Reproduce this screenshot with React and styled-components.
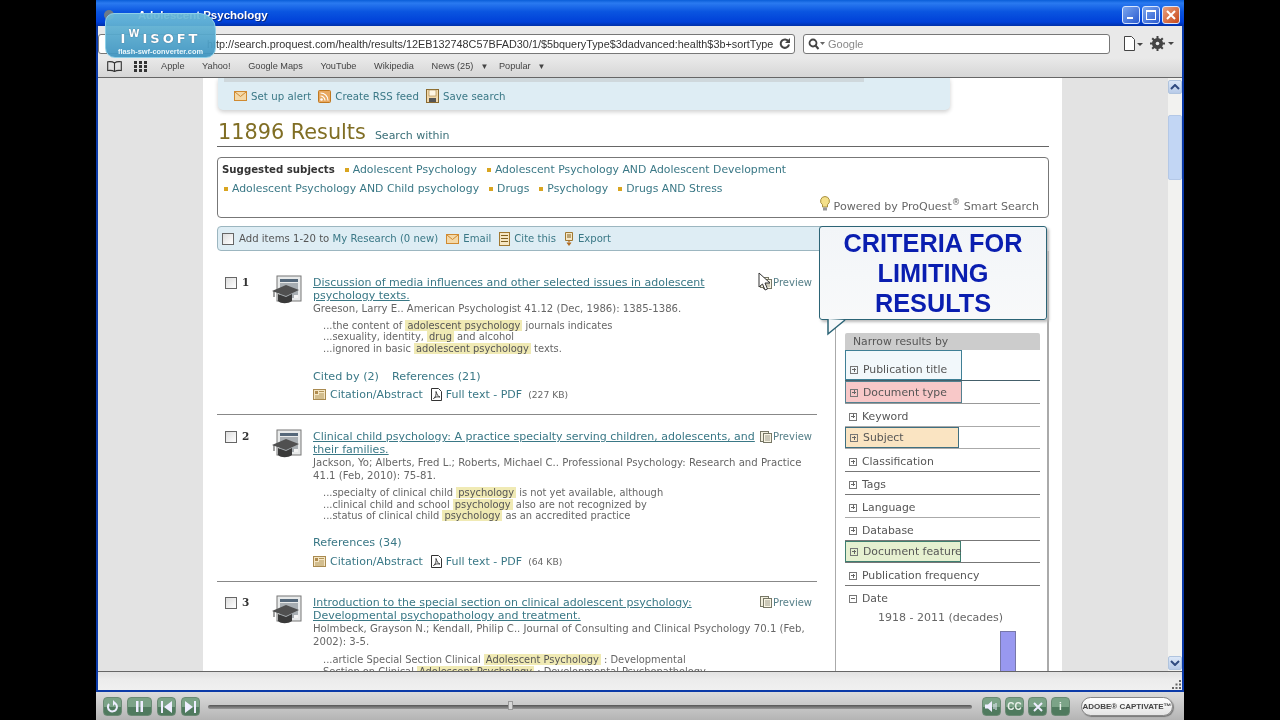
import React from "react";
import styled, { createGlobalStyle } from "styled-components";

const Global = createGlobalStyle`
  html, body { margin: 0; padding: 0; background: #000; overflow: hidden; }
  #root { width: 1280px; height: 720px; }
  * { box-sizing: border-box; }
`;
const Stage = styled.div`
  width: 1280px; height: 720px; padding: 0 96px; background: #000; position: relative; overflow: hidden;
  font-family: "DejaVu Sans", Verdana, sans-serif; filter: blur(0.4px);
`;
const Player = styled.div`display: flex; flex-direction: column; height: 720px; width: 1088px;`;
const Win = styled.div`
  height: 692px; display: flex; flex-direction: column; border: solid #0b3aa8; border-width: 0 2px 2px;
`;
const TitleBar = styled.div`
  height: 26px; flex: none; margin: 0 -2px; padding: 3px 4px 0 8px; display: flex; align-items: center; justify-content: space-between;
  background: linear-gradient(#0a5ed8 0%, #2a7af0 12%, #0a55e0 45%, #0040d8 85%, #0030a8 100%);
  font: bold 11.5px "Liberation Sans", Arial, sans-serif; color: #fff; text-shadow: 1px 1px #0a2a80;
`;
const TitleLeft = styled.div`display: flex; align-items: center; gap: 24px;`;
const Globe = styled.span`width: 10px; height: 10px; border-radius: 50%; background: #6c7a88;`;
const WinBtns = styled.div`display: flex; gap: 2px;`;
const WinBtn = styled.span`
  width: 18px; height: 18px; border-radius: 3px; border: 1px solid #d8e6ff; display: flex; align-items: center; justify-content: center;
  background: ${p => p.$close ? "linear-gradient(135deg,#e8a080,#c84818)" : "linear-gradient(135deg,#7aa6ee,#2a5ad0)"};
`;
const Toolbar = styled.div`
  height: 32px; flex: none; background: #e9e9e9; display: flex; align-items: center; padding: 3px 0 0 0; gap: 8px;
`;
const UrlBox = styled.div`
  width: 697px; flex: none; height: 20px; background: #fff; border: 1px solid #777; border-radius: 3px; display: flex; align-items: center; justify-content: space-between;
  padding: 0 3px 0 108px; font: 10.85px "Liberation Sans", Arial, sans-serif; color: #333; overflow: hidden;
`;
const UrlText = styled.span`white-space: nowrap; overflow: hidden; flex: 1;`;
const SearchBox = styled.div`
  width: 307px; flex: none; height: 20px; background: #fff; border: 1px solid #777; border-radius: 3px; display: flex; align-items: center; gap: 3px;
  padding: 0 4px; font: 11px "Liberation Sans", Arial, sans-serif; color: #888;
`;
const ToolIcons = styled.div`display: flex; align-items: center; gap: 7px; margin-left: 5px;`;
const Bookmarks = styled.div`
  height: 20px; flex: none; background: linear-gradient(#e9e9e9, #d6d6d6); border-bottom: 1px solid #666; display: flex; align-items: center; padding: 0 0 3px 9px;
  font: 9.2px "Liberation Sans", Arial, sans-serif; color: #444; white-space: nowrap;
`;
const BookIcons = styled.div`display: flex; align-items: center; gap: 12px; margin-right: 13px;`;
const BookItems = styled.div`display: flex; align-items: center; gap: 17.6px;`;
const Arrow = styled.span`font-size: 8px; margin: 0 -7px 0 7px; color: #444;`;

const Viewport = styled.div`flex: 1; min-height: 0; display: flex; overflow: hidden; background: #fff;`;
const Gutter = styled.div`width: ${p => p.$w}px; flex: none; background: #e3e3e3;`;
const Center = styled.div`width: 859px; flex: none; padding: 0 13px 0 14px; background: #fff; overflow: hidden;`;
const Scroll = styled.div`
  width: 14px; flex: none; background: #f2f2f0; display: flex; flex-direction: column; justify-content: space-between; position: relative; padding: 2px 0 1px;
`;
const ScrollBtn = styled.div`
  height: 14px; background: linear-gradient(#dce8f8, #b8cbe8); border: 1px solid #b0c4de; border-radius: 2px; display: flex; align-items: center; justify-content: center;
`;
const Thumb = styled.div`
  position: absolute; left: 0; top: 37px; width: 14px; height: 65px; background: #c2d6f4; border: 1px solid #b4c8e6; border-radius: 2px;
`;

const SavePanel = styled.div`
  width: 732px; height: 32px; margin-left: 1px; background: #deedf4; box-shadow: 0 2px 4px #cfcfcf; border-radius: 0 0 5px 5px; position: relative;
  display: flex; align-items: center; gap: 7px; padding: 4px 0 0 16px; font-size: 10.2px; letter-spacing: .05px; white-space: nowrap;
`;
const PanelStrip = styled.div`position: absolute; left: 6px; top: 0; width: 640px; height: 4px; background: #cfd8dc;`;
const IconLink = styled.span`display: inline-flex; align-items: center; gap: 4px; color: #3a7886;`;
const Heading = styled.div`
  height: 37px; border-bottom: 1px solid #666; display: flex; align-items: baseline; gap: 9px; padding: 10px 0 0 1px; white-space: nowrap;
`;
const Count = styled.span`font-size: 20.8px; color: #806e24; line-height: 24px;`;
const Within = styled.span`font-size: 11px; color: #3a6f78;`;
const Suggest = styled.div`
  margin-top: 10px; height: 61px; border: 1px solid #777; border-radius: 4px; padding: 2px 4px 0; font-size: 10.85px; color: #3a7886; position: relative; white-space: nowrap;
`;
const SuggestRow = styled.div`display: flex; align-items: center; height: 19px; gap: 10px; padding-left: ${p => p.$indent || 0}px;`;
const SuggestLabel = styled.b`font-size: 10.2px; color: #333;`;
const Term = styled.span`
  display: inline-flex; align-items: center; gap: 4px;
  &::before { content: ""; width: 4px; height: 4px; background: #d9a520; }
`;
const Powered = styled.div`
  position: absolute; right: 9px; bottom: 1px; display: flex; align-items: center; gap: 3px; font-size: 11.1px; color: #666;
  sup { font-size: 8.5px; line-height: 0; }
`;
const ActionBar = styled.div`
  margin-top: 8px; width: 643px; height: 25px; background: #deedf4; border: 1px solid #9cb6c0; border-radius: 4px; display: flex; align-items: center; gap: 8px;
  padding-left: 4px; font-size: 10.1px; color: #555; white-space: nowrap;
`;
const Check = styled.span`width: 12px; height: 12px; flex: none; border: 1px solid #666; background: linear-gradient(135deg, #ddd, #fff);`;
const AddText = styled.span`
  margin-left: -3px;
  a { color: #3a7886; }
`;
const Columns = styled.div`display: flex; gap: 18px; align-items: flex-start;`;
const Main = styled.div`width: 600px; flex: none; padding-top: 10px;`;
const Result = styled.div`
  display: flex; padding-top: ${p => p.$last ? 14 : 15}px; padding-bottom: 12.5px;
  border-bottom: ${p => p.$last ? "none" : "1px solid #888"};
`;
const ResultLeft = styled.div`width: 96px; flex: none; display: flex; align-items: flex-start; padding-left: 8px; padding-top: 1px;`;
const Num = styled.b`width: 30px; margin: -1px 0 0 5px; font: bold 10.5px "DejaVu Serif", serif; color: #333; line-height: 12px;`;
const MortarSlot = styled.span`display: block; margin-top: -2px;`;
const ResultBody = styled.div`flex: 1; min-width: 0;`;
const TitleRow = styled.div`display: flex; justify-content: space-between; padding-right: 5px;`;
const ResTitle = styled.a`font-size: 11px; line-height: 13px; color: #3a7886; text-decoration: underline; white-space: nowrap;`;
const Preview = styled.span`display: inline-flex; align-items: center; gap: 1px; font-size: 10px; color: #557f88; height: 13px;`;
const Meta = styled.div`font-size: 10.15px; line-height: 13px; color: #666; white-space: nowrap;`;
const Snippets = styled.div`margin: ${p => p.$top}px 0 0 10px; font-size: 9.9px; line-height: 11.8px; color: #666; white-space: nowrap;`;
const Hit = styled.span`background: #f0eab4; color: #555; padding: 0 2px;`;
const LinkRow = styled.div`display: flex; align-items: center; gap: 13px; height: 14px; margin-top: ${p => p.$top}px; font-size: 11.2px; color: #3a7886;`;
const FileRow = styled.div`display: flex; align-items: center; gap: 8px; height: 14px; margin-top: ${p => p.$top}px; font-size: 11px; white-space: nowrap;`;
const Size = styled.small`font-size: 9.2px; color: #666; margin-left: 2px;`;

const Side = styled.div`
  width: 214px; flex: none; height: 420px; padding: 82px 7px 0 9px; border: solid #aaa; border-width: 0 2px 0 1px; color: #555; font-size: 10.85px;
`;
const SideHead = styled.div`height: 17px; line-height: 17px; background: #ccc; padding-left: 8px; color: #555; border-radius: 2px 2px 0 0;`;
const FacetRow = styled.div`
  height: ${p => p.$h || 22.8}px; border-bottom: 1px solid ${p => p.$rule || "#777"}; display: flex; align-items: flex-end;
`;
const Facet = styled.div`
  height: 100%; width: ${p => p.$w ? p.$w + "px" : "auto"}; padding: 0 0 3px 4px; display: flex; align-items: flex-end; gap: 5px; white-space: nowrap; color: #555;
  background: ${p => p.$bg || "transparent"}; border: ${p => p.$bd ? `1px solid ${p.$bd}` : "none"};
`;
const Tree = styled.span`
  width: 8px; height: 8px; flex: none; border: 1px solid #777; position: relative; margin-bottom: 2px;
  &::before { content: ""; position: absolute; left: 1px; top: 2px; width: 4px; height: 1px; background: #666; }
  &::after { content: ${p => p.$open ? "none" : '""'}; position: absolute; left: 2.5px; top: 0.5px; width: 1px; height: 4px; background: #666; }
`;
const Decades = styled.div`text-align: center; margin-top: 2px; font-size: 11px; color: #666; padding-right: 4px;`;
const BarWrap = styled.div`display: flex; padding-left: 155px; margin-top: 7px;`;
const Bar = styled.div`width: 16px; height: 60px; background: #9898f0; border: 1px solid #7777a8;`;

const Status = styled.div`height: 19px; flex: none; background: linear-gradient(#e2e2e2, #ececec 40%, #f0f0f0); border-top: 1px solid #666; display: flex; justify-content: flex-end; align-items: flex-end; padding: 0 1px 1px 0;`;
const Controls = styled.div`
  height: 28px; flex: none; background: linear-gradient(#dcdcdc, #b4b4b4); display: flex; align-items: center; padding: 1px 11px 0 7px;
`;
const Ctrls = styled.div`display: flex; gap: ${p => p.$gap || 4}px; align-items: center;`;
const PBtn = styled.span`
  width: ${p => p.$w || 19}px; height: 19px; border-radius: 4px; background: linear-gradient(#7ba387 50%, #4f7a5e 50%); border: 1px solid #6a8a74; color: #e9f0ea;
  display: flex; align-items: center; justify-content: center; font: bold 10px "Liberation Sans", Arial, sans-serif;
`;
const Track = styled.div`flex: 1; height: 4px; background: linear-gradient(#555, #999); margin: 0 10px 0 8px; position: relative; border-radius: 2px;`;
const Knob = styled.span`position: absolute; left: 300px; top: -4px; width: 5px; height: 9px; background: #d8d8d8; border: 1px solid #999;`;
const AdobeBadge = styled.span`
  margin-left: 11px; width: 92px; height: 19px; border-radius: 10px; background: linear-gradient(#fff, #e4e4e4); border: 1px solid #888; box-shadow: 1px 1px 1px #777;
  display: flex; align-items: center; justify-content: center; font: bold 8px "Liberation Sans", Arial, sans-serif; color: #444; white-space: nowrap;
`;

const Logo = styled.div`
  position: absolute; left: 105px; top: 13px; width: 111px; height: 45px; border-radius: 9px 16px 10px 10px; color: #fff; text-align: center;
  background: linear-gradient(#6cbcdaee, #3f94c0f0); border: 1px solid #8fd0e8; font-family: "Liberation Sans", Arial, sans-serif; overflow: hidden;
`;
const LogoMain = styled.div`font: bold 13px/15px "DejaVu Sans", sans-serif; letter-spacing: 3px; margin-top: 12px; text-shadow: 0 0 1px #246;`;
const LogoW = styled.span`font-size: 10px; vertical-align: 6px;`;
const LogoSub = styled.div`font-size: 7.4px; font-weight: bold; line-height: 10px; color: #e8f6fb; margin-top: 1px; white-space: nowrap;`;
const Callout = styled.div`
  position: absolute; left: 819px; top: 226px; width: 228px; height: 94px; background: linear-gradient(#f2f5f8, #f8f9fa); border: 1px solid #2c6476; border-radius: 3px;
  box-shadow: 2px 2px 3px #bbb; display: flex; align-items: center; justify-content: center; text-align: center;
  font: bold 25.3px/30px "Liberation Sans", Arial, sans-serif; color: #0a1eb0;
`;
const Tail = styled.svg`position: absolute; left: 827px; top: 319px;`;
const Cursor = styled.svg`position: absolute; left: 758px; top: 272px;`;

const Envelope = () => (
  <svg width="13" height="10" viewBox="0 0 13 10"><rect x=".5" y=".5" width="12" height="9" fill="#f4d9a8" stroke="#d08a30" /><path d="M1 1l5.500 4.500L12 1" fill="none" stroke="#d08a30" /></svg>
);
const Rss = () => (
  <svg width="13" height="13" viewBox="0 0 13 13"><rect x=".5" y=".5" width="12" height="12" rx="1" fill="#e8a860" stroke="#c07820" /><circle cx="3.500" cy="9.500" r="1.300" fill="#fff" /><path d="M2.500 6a4.500 4.500 0 0 1 4.500 4.500M2.500 3a7.500 7.500 0 0 1 7.500 7.500" fill="none" stroke="#fff" strokeWidth="1.200" /></svg>
);
const Floppy = () => (
  <svg width="13" height="14" viewBox="0 0 13 14"><rect x=".5" y=".5" width="12" height="13" fill="#f2d9ac" stroke="#8a6a30" /><rect x="3" y="1" width="7" height="6" fill="#fff6e4" stroke="#a08040" strokeWidth=".6" /><rect x="3" y="9" width="7" height="4" fill="#555" /></svg>
);
const CiteIcon = () => (
  <svg width="11" height="14" viewBox="0 0 11 14"><rect x=".5" y=".5" width="10" height="13" fill="#f6e7c4" stroke="#a07830" /><path d="M2 3.500h7M2 6.500h7M2 9.500h7" stroke="#806020" /></svg>
);
const ExportIcon = () => (
  <svg width="10" height="14" viewBox="0 0 10 14"><path d="M1.500.5h7v8h-7z" fill="#f6e7c4" stroke="#a07830" /><path d="M3 3h4M3 5h4" stroke="#806020" /><path d="M5 8v4M3 10.500L5 13l2-2.500" fill="none" stroke="#b06a20" strokeWidth="1.200" /></svg>
);
const PreviewIcon = () => (
  <svg width="12" height="12" viewBox="0 0 12 12"><rect x=".5" y=".5" width="8" height="10" fill="#f3f0e0" stroke="#776" /><rect x="3.500" y="2.500" width="8" height="9" fill="#f8f4e4" stroke="#776" /><path d="M5 5h5M5 7h5M5 9h5" stroke="#887" strokeWidth=".8" /></svg>
);
const Abstract = () => (
  <svg width="13" height="11" viewBox="0 0 13 11"><rect x=".5" y=".5" width="12" height="10" fill="#f5e6c4" stroke="#a98a50" /><rect x="2" y="2" width="3" height="3" fill="#b08c50" /><path d="M6 2.500h5M6 5h5M2 7h9M2 9h9" stroke="#a08040" strokeWidth=".8" /></svg>
);
const Pdf = () => (
  <svg width="11" height="13" viewBox="0 0 11 13"><path d="M.5.5h7l3 3v9h-10z" fill="#fff" stroke="#333" /><path d="M2.500 10.500c2-1 3-4 2.500-7 1 3 2 5 4 5.500-3-.5-5 0-6.500 1.500z" fill="none" stroke="#333" strokeWidth=".9" /></svg>
);
const Mortar = () => (
  <svg width="31" height="30" viewBox="0 0 31 30" style={{ display: "block" }}>
    <rect x="5" y="1" width="24" height="25" fill="#e8eaea" stroke="#777" />
    <rect x="8" y="4" width="18" height="3" fill="#55687a" />
    <rect x="8" y="8" width="18" height="15" fill="#a8aeb2" />
    <rect x="22" y="20" width="4" height="3" fill="#f4f4f4" />
    <path d="M0 16L14 10l13 5-13 6z" fill="#505050" />
    <path d="M6 19v7c3 3 10 3 14 0v-7l-6 3z" fill="#3a3a3a" />
    <path d="M2 16v6" stroke="#444" />
  </svg>
);
const Bulb = () => (
  <svg width="12" height="15" viewBox="0 0 12 15" style={{ marginBottom: 5 }}><path d="M6 .5a4.500 4.500 0 0 0-2.500 8.200V11h5V8.700A4.500 4.500 0 0 0 6 .5z" fill="#f4e08a" stroke="#a89040" /><rect x="4" y="11.500" width="4" height="3" fill="#999" /></svg>
);
const TopArrow = ({ down }) => (
  <svg width="10" height="6" viewBox="0 0 10 6"><path d={down ? "M1 1l4 4 4-4" : "M1 5l4-4 4 4"} fill="none" stroke="#2f4a80" strokeWidth="2" /></svg>
);

const facets = [
  { t: "Publication title", h: 31, w: 117, bg: "#f2f8fb", bd: "#3f7f95", rule: "#445f6a" },
  { t: "Document type", w: 117, bg: "#f8c8c8", bd: "#55808f", rule: "#999" },
  { t: "Keyword", rule: "#aaa" },
  { t: "Subject", w: 114, bg: "#fae4c2", bd: "#3f6f80", rule: "#aaa" },
  { t: "Classification" },
  { t: "Tags" },
  { t: "Language", rule: "#aaa" },
  { t: "Database" },
  { t: "Document feature", w: 116, bg: "#e6f0d0", bd: "#3f7f70" },
  { t: "Publication frequency" },
];

const results = [
  {
    n: 1, snipTop: 4.5, linkTop: 15, fileTop: 4,
    title: ["Discussion of media influences and other selected issues in adolescent", "psychology texts."],
    meta: ["Greeson, Larry E.. American Psychologist 41.12  (Dec, 1986): 1385-1386."],
    snippets: [
      ["...the content of ", "adolescent psychology", " journals indicates"],
      ["...sexuality, identity, ", "drug", " and alcohol"],
      ["...ignored in basic ", "adolescent psychology", " texts."],
    ],
    links: ["Cited by (2)", "References (21)"],
    size: "(227 KB)",
  },
  {
    n: 2, snipTop: 4.5, linkTop: 13.5, fileTop: 4.5,
    title: ["Clinical child psychology: A practice specialty serving children, adolescents, and", "their families."],
    meta: ["Jackson, Yo; Alberts, Fred L.; Roberts, Michael C.. Professional Psychology: Research and Practice", "41.1  (Feb, 2010): 75-81."],
    snippets: [
      ["...specialty of clinical child ", "psychology", " is not yet available, although"],
      ["...clinical child and school ", "psychology", " also are not recognized by"],
      ["...status of clinical child ", "psychology", " as an accredited practice"],
    ],
    links: ["References (34)"],
    size: "(64 KB)",
  },
  {
    n: 3, snipTop: 6,
    title: ["Introduction to the special section on clinical adolescent psychology:", "Developmental psychopathology and treatment."],
    meta: ["Holmbeck, Grayson N.; Kendall, Philip C.. Journal of Consulting and Clinical Psychology 70.1  (Feb,", "2002): 3-5."],
    snippets: [
      ["...article Special Section Clinical ", "Adolescent Psychology", " : Developmental"],
      ["Section on Clinical ", "Adolescent Psychology", " : Developmental Psychopathology"],
    ],
    links: [],
    last: true,
  },
];

const ResultItem = ({ r }) => (
  <Result $last={r.last}>
    <ResultLeft>
      <Check />
      <Num>{r.n}</Num>
      <MortarSlot><Mortar /></MortarSlot>
    </ResultLeft>
    <ResultBody>
      <TitleRow>
        <ResTitle>{r.title[0]}<br />{r.title[1]}</ResTitle>
        <Preview><PreviewIcon />Preview</Preview>
      </TitleRow>
      <Meta>{r.meta.map(m => <div key={m}>{m}</div>)}</Meta>
      <Snippets $top={r.snipTop}>
        {r.snippets.map((s, i) => <div key={i}>{s[0]}<Hit>{s[1]}</Hit>{s[2]}</div>)}
      </Snippets>
      {r.links.length > 0 && (
        <>
          <LinkRow $top={r.linkTop}>{r.links.map(l => <span key={l}>{l}</span>)}</LinkRow>
          <FileRow $top={r.fileTop}>
            <IconLink><Abstract />Citation/Abstract</IconLink>
            <IconLink><Pdf />Full text - PDF<Size>{r.size}</Size></IconLink>
          </FileRow>
        </>
      )}
    </ResultBody>
  </Result>
);

export default function App() {
  return (
    <Stage>
      <Global />
      <Player>
        <Win>
          <TitleBar>
            <TitleLeft><Globe /><span>Adolescent Psychology</span></TitleLeft>
            <WinBtns>
              <WinBtn><svg width="8" height="8"><rect x="0" y="6" width="6" height="2" fill="#fff" /></svg></WinBtn>
              <WinBtn><svg width="10" height="10"><rect x=".5" y="1.500" width="9" height="8" fill="none" stroke="#fff" /><rect x="0" y="0" width="10" height="2" fill="#fff" /></svg></WinBtn>
              <WinBtn $close><svg width="10" height="10"><path d="M1 1l8 8M9 1l-8 8" stroke="#fff" strokeWidth="2" /></svg></WinBtn>
            </WinBtns>
          </TitleBar>
          <Toolbar>
            <UrlBox>
              <UrlText>http://search.proquest.com/health/results/12EB132748C57BFAD30/1/$5bqueryType$3dadvanced:health$3b+sortType</UrlText>
              <svg width="13" height="13" viewBox="0 0 13 13" style={{ marginLeft: 3 }}><path d="M10.500 4.500a4.200 4.200 0 1 0 .5 3" fill="none" stroke="#444" strokeWidth="2" /><path d="M12 1v5H7z" fill="#444" /></svg>
            </UrlBox>
            <SearchBox>
              <svg width="17" height="12" viewBox="0 0 17 12"><circle cx="5" cy="5" r="3.500" fill="none" stroke="#444" strokeWidth="1.800" /><path d="M7.500 7.500l3 3.500" stroke="#444" strokeWidth="2" /><path d="M12 4h5l-2.500 3z" fill="#666" /></svg>
              Google
            </SearchBox>
            <ToolIcons>
              <svg width="20" height="15" viewBox="0 0 20 15"><path d="M1.500.5h7l3 3v11h-10z" fill="#fff" stroke="#444" /><path d="M14 7h6l-3 3z" fill="#444" /></svg>
              <svg width="24" height="15" viewBox="0 0 24 15"><circle cx="7.500" cy="7.500" r="4" fill="none" stroke="#444" strokeWidth="3" /><path d="M7.500 0v15M0 7.500h15M2.200 2.200l10.600 10.600M12.800 2.200L2.200 12.800" stroke="#444" strokeWidth="2" /><circle cx="7.500" cy="7.500" r="1.800" fill="#e9e9e9" /><path d="M18 6h6l-3 3z" fill="#444" /></svg>
            </ToolIcons>
          </Toolbar>
          <Bookmarks>
            <BookIcons>
              <svg width="15" height="11" viewBox="0 0 15 11"><path d="M7.500 2C6 .8 3 .5 .7.800v8.700c2.300-.3 5.300 0 6.800 1 1.500-1 4.500-1.300 6.800-1V.8C12 .5 9 .8 7.500 2zM7.500 2v8.500" fill="none" stroke="#333" strokeWidth="1.100" /></svg>
              <svg width="14" height="11" viewBox="0 0 14 11" fill="#333"><path d="M0 0h3v3H0zM5 0h3v3H5zM10 0h3v3h-3zM0 4h3v3H0zM5 4h3v3H5zM10 4h3v3h-3zM0 8h3v3H0zM5 8h3v3H5zM10 8h3v3h-3z" /></svg>
            </BookIcons>
            <BookItems>
              <span>Apple</span><span>Yahoo!</span><span>Google Maps</span><span>YouTube</span><span>Wikipedia</span>
              <span>News (25)<Arrow>▼</Arrow></span><span>Popular<Arrow>▼</Arrow></span>
            </BookItems>
          </Bookmarks>
          <Viewport>
            <Gutter $w={105} />
            <Center>
              <SavePanel>
                <PanelStrip />
                <IconLink><Envelope />Set up alert</IconLink>
                <IconLink><Rss />Create RSS feed</IconLink>
                <IconLink><Floppy />Save search</IconLink>
              </SavePanel>
              <Heading><Count>11896 Results</Count><Within>Search within</Within></Heading>
              <Suggest>
                <SuggestRow>
                  <SuggestLabel>Suggested subjects</SuggestLabel>
                  <Term>Adolescent Psychology</Term>
                  <Term>Adolescent Psychology AND Adolescent Development</Term>
                </SuggestRow>
                <SuggestRow $indent={2}>
                  <Term>Adolescent Psychology AND Child psychology</Term>
                  <Term>Drugs</Term>
                  <Term>Psychology</Term>
                  <Term>Drugs AND Stress</Term>
                </SuggestRow>
                <Powered><Bulb /><span>Powered by ProQuest<sup>®</sup> Smart Search</span></Powered>
              </Suggest>
              <ActionBar>
                <Check />
                <AddText>Add items 1-20 to <a>My Research (0 new)</a></AddText>
                <IconLink><Envelope />Email</IconLink>
                <IconLink><CiteIcon />Cite this</IconLink>
                <IconLink><ExportIcon />Export</IconLink>
              </ActionBar>
              <Columns>
                <Main>{results.map(r => <ResultItem key={r.n} r={r} />)}</Main>
                <Side>
                  <SideHead>Narrow results by</SideHead>
                  {facets.map(f => (
                    <FacetRow key={f.t} $h={f.h} $rule={f.rule}>
                      <Facet $w={f.w} $bg={f.bg} $bd={f.bd}><Tree />{f.t}</Facet>
                    </FacetRow>
                  ))}
                  <FacetRow $rule="transparent"><Facet><Tree $open />Date</Facet></FacetRow>
                  <Decades>1918 - 2011 (decades)</Decades>
                  <BarWrap><Bar /></BarWrap>
                </Side>
              </Columns>
            </Center>
            <Gutter $w={106} />
            <Scroll>
              <ScrollBtn><TopArrow /></ScrollBtn>
              <Thumb />
              <ScrollBtn><TopArrow down /></ScrollBtn>
            </Scroll>
          </Viewport>
          <Status>
            <svg width="9" height="9" viewBox="0 0 9 9" fill="#666"><path d="M7 0h2v2H7zM7 3.500h2v2H7zM3.500 3.500h2v2h-2zM7 7h2v2H7zM3.500 7h2v2h-2zM0 7h2v2H0z" /></svg>
          </Status>
        </Win>
        <Controls>
          <Ctrls $gap={5}>
            <PBtn><svg width="13" height="13" viewBox="0 0 13 13"><path d="M3 4a4.500 4.500 0 1 0 6-.8" fill="none" stroke="#eef" strokeWidth="2" /><path d="M7 0v6l3-3z" fill="#eef" /></svg></PBtn>
            <PBtn $w={25}><svg width="9" height="11"><path d="M1 0h2.500v11H1zM5.500 0H8v11H5.500z" fill="#eef" /></svg></PBtn>
            <PBtn><svg width="11" height="12"><path d="M0 0h2v12H0zM11 0v12L3 6z" fill="#eef" /></svg></PBtn>
            <PBtn><svg width="11" height="12"><path d="M9 0h2v12H9zM0 0v12l8-6z" fill="#eef" /></svg></PBtn>
          </Ctrls>
          <Track><Knob /></Track>
          <Ctrls $gap={4}>
            <PBtn><svg width="13" height="11"><path d="M0 3.500h3L7 0v11L3 7.500H0z" fill="#eef" /><path d="M9 3v5M11 2v7" stroke="#eef" /></svg></PBtn>
            <PBtn>CC</PBtn>
            <PBtn><svg width="10" height="10"><path d="M1 1l8 8M9 1l-8 8" stroke="#eef" strokeWidth="2" /></svg></PBtn>
            <PBtn>i</PBtn>
          </Ctrls>
          <AdobeBadge>ADOBE® CAPTIVATE™</AdobeBadge>
        </Controls>
      </Player>
      <Logo>
        <LogoMain>I<LogoW>W</LogoW>ISOFT</LogoMain>
        <LogoSub>flash-swf-converter.com</LogoSub>
      </Logo>
      <Callout>CRITERIA FOR<br />LIMITING<br />RESULTS</Callout>
      <Tail width="30" height="18" viewBox="0 0 30 18"><path d="M1 0L1 15 18 1" fill="#f6f8fa" stroke="#2c6476" strokeWidth="1.500" /></Tail>
      <Cursor width="16" height="20" viewBox="0 0 16 20"><path d="M1 1v14l3.500-3 2.500 6 2.500-1-2.500-6H12z" fill="#fff" stroke="#333" /></Cursor>
    </Stage>
  );
}
